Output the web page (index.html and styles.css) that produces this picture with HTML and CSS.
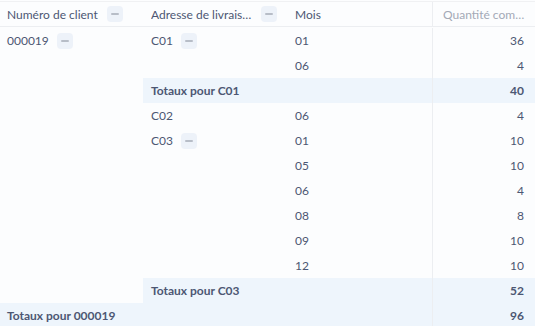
FILE: index.html
```html
<!DOCTYPE html>
<html>
<head>
<meta charset="utf-8">
<link rel="stylesheet" href="styles.css">
</head>
<body>
<div class="pivot">
  <div class="head">
    <div class="hcell c1"><span class="label">Numéro de client</span><span class="btn"></span></div>
    <div class="hcell c2"><span class="label trunc">Adresse de livraison</span><span class="btn"></span></div>
    <div class="hcell c3"><span class="label">Mois</span></div>
    <div class="hcell c4"><span class="label trunc muted">Quantité commandée</span></div>
  </div>
  <div class="body">
    <div class="cell c1" style="grid-row: 1 / span 11"><span>000019</span><span class="btn"></span></div>

    <div class="cell c2" style="grid-row: 1 / span 2"><span>C01</span><span class="btn"></span></div>
    <div class="cell c3" style="grid-row: 1">01</div>
    <div class="cell c4 num" style="grid-row: 1">36</div>
    <div class="cell c3" style="grid-row: 2">06</div>
    <div class="cell c4 num" style="grid-row: 2">4</div>

    <div class="cell total t23" style="grid-row: 3">Totaux pour C01</div>
    <div class="cell c4 num total" style="grid-row: 3">40</div>

    <div class="cell c2" style="grid-row: 4"><span>C02</span></div>
    <div class="cell c3" style="grid-row: 4">06</div>
    <div class="cell c4 num" style="grid-row: 4">4</div>

    <div class="cell c2" style="grid-row: 5 / span 6"><span>C03</span><span class="btn"></span></div>
    <div class="cell c3" style="grid-row: 5">01</div>
    <div class="cell c4 num" style="grid-row: 5">10</div>
    <div class="cell c3" style="grid-row: 6">05</div>
    <div class="cell c4 num" style="grid-row: 6">10</div>
    <div class="cell c3" style="grid-row: 7">06</div>
    <div class="cell c4 num" style="grid-row: 7">4</div>
    <div class="cell c3" style="grid-row: 8">08</div>
    <div class="cell c4 num" style="grid-row: 8">8</div>
    <div class="cell c3" style="grid-row: 9">09</div>
    <div class="cell c4 num" style="grid-row: 9">10</div>
    <div class="cell c3" style="grid-row: 10">12</div>
    <div class="cell c4 num" style="grid-row: 10">10</div>

    <div class="cell total t23" style="grid-row: 11">Totaux pour C03</div>
    <div class="cell c4 num total" style="grid-row: 11">52</div>

    <div class="cell total t123" style="grid-row: 12">Totaux pour 000019</div>
    <div class="cell c4 num total" style="grid-row: 12">96</div>
  </div>
</div>
</body>
</html>
```

FILE: styles.css
```css
html, body {
  margin: 0;
  padding: 0;
  background: #fcfdfe;
}
body {
  font-family: Lato, "Noto Sans", sans-serif;
  font-size: 12px;
  color: #4c5773;
  overflow: hidden;
}
.pivot {
  width: 535px;
  padding-top: 1px;
}
.head {
  display: grid;
  grid-template-columns: 143px 144px 145px 1fr;
  height: 24px;
  border-top: 1px solid #f0f1f3;
  border-bottom: 1px solid #eceef1;
  margin-bottom: 1px;
}
.hcell {
  display: flex;
  align-items: center;
  padding-left: 8px;
  min-width: 0;
}
.hcell.c1 { padding-left: 7px; }
.hcell.c4 {
  border-left: 1px solid #eceef1;
  padding-left: 10px;
  padding-right: 4px;
}
.label {
  white-space: nowrap;
}
.trunc {
  overflow: hidden;
  text-overflow: ellipsis;
  min-width: 0;
}
.hcell.c2 .label { max-width: 101px; }
.muted { color: #a3a9b6; }
.btn {
  flex: none;
  position: relative;
  width: 16px;
  height: 16px;
  border-radius: 4px;
  background: #edf2f9;
  margin-left: 9px;
}
.btn::after {
  content: "";
  position: absolute;
  left: 4px;
  top: 7px;
  width: 8px;
  height: 2px;
  border-radius: 1px;
  background: #b7bdc7;
}
.body {
  display: grid;
  grid-template-columns: 143px 144px 145px 1fr;
  grid-auto-rows: 25px;
}
.cell {
  display: flex;
  align-items: flex-start;
  padding-left: 8px;
  line-height: 25px;
  min-width: 0;
  white-space: nowrap;
}
.cell > span { line-height: 25px; }
.cell .btn { margin-top: 5px; margin-left: 8px; }
.c1 { grid-column: 1; padding-left: 7px; }
.c2 { grid-column: 2; }
.c3 { grid-column: 3; }
.c4 { grid-column: 4; border-left: 1px solid #eceef1; }
.num {
  justify-content: flex-end;
  padding-right: 11px;
}
.total {
  background: #eef5fc;
  font-weight: 700;
}
.t23 { grid-column: 2 / span 2; }
.t123 { grid-column: 1 / span 3; padding-left: 7px; }
```
